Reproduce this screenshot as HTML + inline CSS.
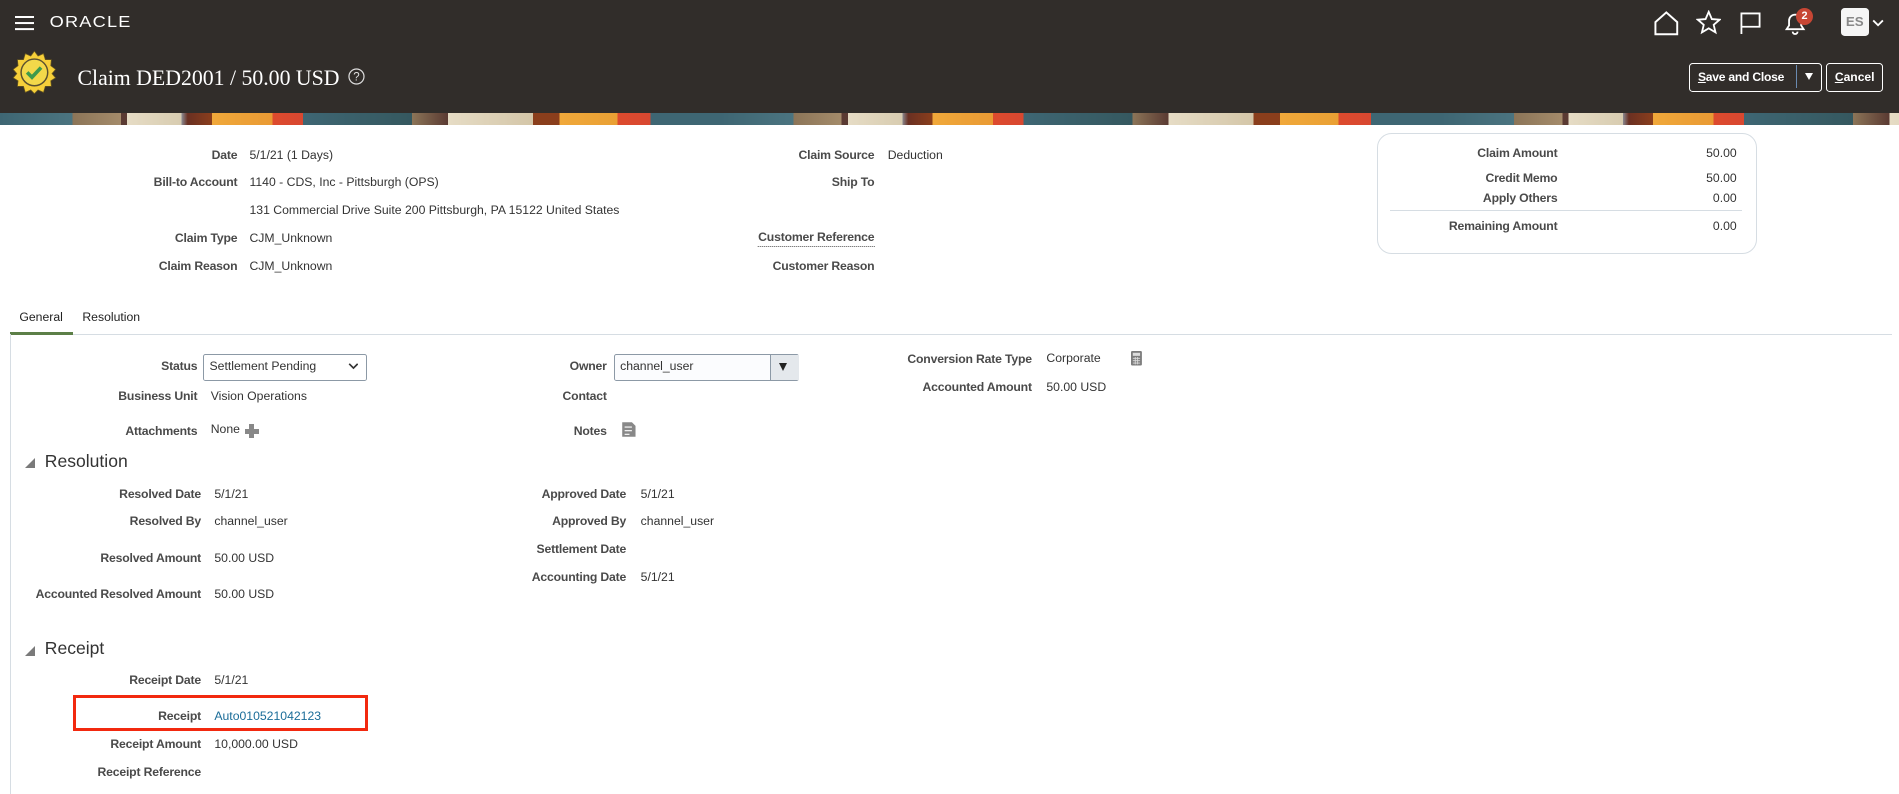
<!DOCTYPE html>
<html><head><meta charset="utf-8"><style>
html,body{margin:0;padding:0;background:#fff;overflow:hidden}
body{width:1899px;height:794px}
#w{zoom:1.21110;width:1568px;height:656px;position:relative;font-family:"Liberation Sans",Arial,sans-serif;font-size:10.1px;color:#333}
.a{position:absolute;white-space:nowrap;line-height:14px;margin-top:1px}
.l{position:absolute;white-space:nowrap;line-height:14px;margin-top:1px;text-align:right;font-weight:bold;color:#4a4a4a;transform:translateX(-100%);letter-spacing:-.15px}
.hd{position:absolute;left:0;top:0;width:1568px;height:93px;background:#312d2a}
.ban{position:absolute;left:0;top:93px;width:1568px;height:10px;background:repeating-linear-gradient(90deg,#3e6673 0,#4b7480 60px,#8c7558 60px,#a48b6a 100px,#5a3a32 100px,#5a3a32 105px,#e6dcc5 105px,#d8ccb0 150px,#8a8a92 150px,#6a3022 155px,#8a3e1c 175px,#f0a83a 175px,#e99a34 225px,#dd4a2e 225px,#d84830 250px,#3e6673 250px,#35585f 340px,#8c7558 340px,#5a3a32 370px,#e6dcc5 370px,#d4c6a8 440px,#8a3e1c 440px,#8a3e1c 462px,#f0a83a 462px,#e9a034 510px,#dd4a2e 510px,#d84830 537px,#3e6673 537px,#3e6673 595px)}
.sec{position:absolute;font-size:14.5px;color:#333;line-height:18px}
.tri{position:absolute;width:0;height:0;border-left:9px solid transparent;border-bottom:9px solid #7a7a7a}
</style></head><body><div id="w">
<div class="hd"></div>
<div class="ban"></div>
<div style="position:absolute;left:12px;top:13px;width:16px;height:2px;background:#fff;box-shadow:0 5px 0 #fff,0 10px 0 #fff"></div>
<div class="a" style="left:41px;top:10px;color:#fff;font-size:15px;letter-spacing:1px;line-height:16px;transform:scaleY(.85)">ORACLE</div>
<svg style="position:absolute;left:10px;top:41px" width="37" height="37" viewBox="0 0 37 37"><polygon points="18.5,1 21.5,5 26,3 27.5,8 32.5,8 32,13 36,16 33,19.5 36,23 32,25.5 32.5,30 27.5,30 26,35 21.5,33 18.5,36 15.5,33 11,35 9.5,30 4.5,30 5,25.5 1,23 4,19.5 1,16 5,13 4.5,8 9.5,8 11,3 15.5,5" fill="#f6cf3a" stroke="#6b5a1e" stroke-width=".6"/><circle cx="18.5" cy="18.5" r="11" fill="#f3d84a" stroke="#5a5030" stroke-width="1.2"/><path d="M12.5 18.5l4 4 7.5-8" stroke="#3d9a4c" stroke-width="3" fill="none"/></svg>
<div class="a" style="left:64px;top:53px;color:#fff;font-family:'Liberation Serif',serif;font-size:18px;line-height:22px">Claim DED2001 / 50.00 USD</div>
<svg style="position:absolute;left:287px;top:56px" width="14" height="14"><circle cx="7" cy="7" r="6.2" fill="none" stroke="#ddd" stroke-width="1"/><text x="7" y="10.5" font-size="9.5" fill="#ddd" text-anchor="middle" font-family="Liberation Sans">?</text></svg>
<svg style="position:absolute;left:1365px;top:8px" width="22" height="22"><path d="M2 10 L11 2 L20 10 V20 H2 Z" fill="none" stroke="#fff" stroke-width="1.6"/></svg>
<svg style="position:absolute;left:1400px;top:8px" width="21" height="21"><path d="M10.5 1.5l2.6 6 6.4.5-4.9 4.2 1.5 6.3-5.6-3.4-5.6 3.4 1.5-6.3L1.5 8l6.4-.5z" fill="none" stroke="#fff" stroke-width="1.5"/></svg>
<svg style="position:absolute;left:1436px;top:9px" width="20" height="20"><path d="M2 19V2h15v11H2" fill="none" stroke="#fff" stroke-width="1.5"/></svg>
<svg style="position:absolute;left:1472px;top:9px" width="20" height="20"><path d="M3 15h14l-2-3V8a5 5 0 0 0-10 0v4z M8 17a2 2 0 0 0 4 0" fill="none" stroke="#fff" stroke-width="1.5"/></svg>
<div style="position:absolute;left:1483px;top:7px;width:14px;height:14px;border-radius:50%;background:#c74634;color:#fff;font-size:9px;font-weight:bold;text-align:center;line-height:14px">2</div>
<div style="position:absolute;left:1520px;top:7px;width:23px;height:23px;border-radius:3px;background:#f5f5f5;color:#888;font-size:11px;font-weight:bold;text-align:center;line-height:23px">ES</div>
<svg style="position:absolute;left:1546px;top:15px" width="10" height="8"><path d="M1 2l4 4 4-4" fill="none" stroke="#fff" stroke-width="1.5"/></svg>
<div style="position:absolute;left:1395px;top:52px;width:108px;height:22px;border:1px solid #fff;border-radius:3px"></div>
<div class="a" style="left:1402px;top:56px;color:#fff;font-weight:bold;font-size:10px;letter-spacing:-.2px"><u>S</u>ave and Close</div>
<div style="position:absolute;left:1483px;top:54px;width:1px;height:19px;background:#6a8ab0"></div>
<div style="position:absolute;left:1490px;top:60px;border-left:4px solid transparent;border-right:4px solid transparent;border-top:6px solid #fff"></div>
<div style="position:absolute;left:1508px;top:52px;width:45px;height:22px;border:1px solid #fff;border-radius:3px"></div>
<div class="a" style="left:1515px;top:56px;color:#fff;font-weight:bold;font-size:10px"><u>C</u>ancel</div>

<div class="l" style="left:196px;top:120px">Date</div><div class="a" style="left:206px;top:120px">5/1/21 (1 Days)</div>
<div class="l" style="left:196px;top:143px">Bill-to Account</div><div class="a" style="left:206px;top:143px">1140 - CDS, Inc - Pittsburgh (OPS)</div>
<div class="a" style="left:206px;top:166px">131 Commercial Drive Suite 200 Pittsburgh, PA 15122 United States</div>
<div class="l" style="left:196px;top:189px">Claim Type</div><div class="a" style="left:206px;top:189px">CJM_Unknown</div>
<div class="l" style="left:196px;top:212px">Claim Reason</div><div class="a" style="left:206px;top:212px">CJM_Unknown</div>
<div class="l" style="left:722px;top:120px">Claim Source</div><div class="a" style="left:733px;top:120px">Deduction</div>
<div class="l" style="left:722px;top:143px">Ship To</div>
<div class="l" style="left:722px;top:189px;border-bottom:1px dotted #555;line-height:13px">Customer Reference</div>
<div class="l" style="left:722px;top:212px">Customer Reason</div>
<div style="position:absolute;left:1137px;top:110px;width:312px;height:98px;border:1px solid #d6dde3;border-radius:12px"></div>
<div class="l" style="left:1286px;top:119px">Claim Amount</div><div class="a" style="left:1434px;top:119px;transform:translateX(-100%)">50.00</div>
<div class="l" style="left:1286px;top:139px">Credit Memo</div><div class="a" style="left:1434px;top:139px;transform:translateX(-100%)">50.00</div>
<div class="l" style="left:1286px;top:156px">Apply Others</div><div class="a" style="left:1434px;top:156px;transform:translateX(-100%)">0.00</div>
<div style="position:absolute;left:1148px;top:173px;width:290px;height:1px;background:#d6dde3"></div>
<div class="l" style="left:1286px;top:179px">Remaining Amount</div><div class="a" style="left:1434px;top:179px;transform:translateX(-100%)">0.00</div>
<div class="a" style="left:16px;top:254px;color:#222">General</div>
<div class="a" style="left:68px;top:254px;color:#222">Resolution</div>
<div style="position:absolute;left:8px;top:276px;width:1554px;height:1px;background:#d6dde3"></div>
<div style="position:absolute;left:8px;top:274px;width:52px;height:3px;background:#5c7f47"></div>
<div style="position:absolute;left:8px;top:276px;width:1px;height:380px;background:#d6dde3"></div>
<div class="l" style="left:163px;top:295px">Status</div>
<div style="position:absolute;left:168px;top:292px;width:133px;height:21px;border:1px solid #8c99a6;border-radius:2px"></div>
<div class="a" style="left:173px;top:295px">Settlement Pending</div>
<svg style="position:absolute;left:287px;top:299px" width="9" height="7"><path d="M1 1.5l3.5 3.5 3.5-3.5" fill="none" stroke="#333" stroke-width="1.4"/></svg>
<div class="l" style="left:163px;top:319px">Business Unit</div><div class="a" style="left:174px;top:319px">Vision Operations</div>
<div class="l" style="left:163px;top:348px">Attachments</div><div class="a" style="left:174px;top:347px">None</div>
<div style="position:absolute;left:202px;top:354px;width:12px;height:4px;background:#888"></div><div style="position:absolute;left:206px;top:350px;width:4px;height:12px;background:#888"></div>
<div class="l" style="left:501px;top:295px">Owner</div>
<div style="position:absolute;left:507px;top:292px;width:151px;height:21px;border:1px solid #8c99a6;border-radius:2px;background:#fbfcfe"></div>
<div style="position:absolute;left:636px;top:293px;width:23px;height:21px;background:#e4e8ec;border-left:1px solid #8c99a6"></div>
<div style="position:absolute;left:643px;top:300px;border-left:4px solid transparent;border-right:4px solid transparent;border-top:7px solid #222"></div>
<div class="a" style="left:512px;top:295px">channel_user</div>
<div class="l" style="left:501px;top:319px">Contact</div>
<div class="l" style="left:501px;top:348px">Notes</div>
<svg style="position:absolute;left:513px;top:348px" width="13" height="14"><path d="M1 1h8l3 3v9H1z" fill="#888"/><path d="M3 5h6M3 8h6M3 11h4" stroke="#fff" stroke-width="1"/></svg>
<div class="l" style="left:852px;top:289px">Conversion Rate Type</div><div class="a" style="left:864px;top:288px">Corporate</div>
<svg style="position:absolute;left:934px;top:290px" width="9" height="12"><rect width="9" height="12" rx="1" fill="#7d7d7d"/><rect x="1.5" y="1.5" width="6" height="2.5" fill="#ddd"/><path d="M1.5 6h6M1.5 8h6M1.5 10h6M3.5 5v6M5.5 5v6" stroke="#ddd" stroke-width=".7"/></svg>
<div class="l" style="left:852px;top:312px">Accounted Amount</div><div class="a" style="left:864px;top:312px">50.00 USD</div>
<div class="tri" style="left:21px;top:378px"></div>
<div class="sec" style="left:37px;top:372px">Resolution</div>
<div class="l" style="left:166px;top:400px">Resolved Date</div><div class="a" style="left:177px;top:400px">5/1/21</div>
<div class="l" style="left:166px;top:423px">Resolved By</div><div class="a" style="left:177px;top:423px">channel_user</div>
<div class="l" style="left:166px;top:453px">Resolved Amount</div><div class="a" style="left:177px;top:453px">50.00 USD</div>
<div class="l" style="left:166px;top:483px">Accounted Resolved Amount</div><div class="a" style="left:177px;top:483px">50.00 USD</div>
<div class="l" style="left:517px;top:400px">Approved Date</div><div class="a" style="left:529px;top:400px">5/1/21</div>
<div class="l" style="left:517px;top:423px">Approved By</div><div class="a" style="left:529px;top:423px">channel_user</div>
<div class="l" style="left:517px;top:446px">Settlement Date</div>
<div class="l" style="left:517px;top:469px">Accounting Date</div><div class="a" style="left:529px;top:469px">5/1/21</div>
<div class="tri" style="left:21px;top:533px"></div>
<div class="sec" style="left:37px;top:527px">Receipt</div>
<div class="l" style="left:166px;top:554px">Receipt Date</div><div class="a" style="left:177px;top:554px">5/1/21</div>
<div style="position:absolute;left:60px;top:574px;width:239px;height:25px;border:3px solid #f2290f"></div>
<div class="l" style="left:166px;top:584px">Receipt</div><div class="a" style="left:177px;top:584px;color:#1a6c98">Auto010521042123</div>
<div class="l" style="left:166px;top:607px">Receipt Amount</div><div class="a" style="left:177px;top:607px">10,000.00 USD</div>
<div class="l" style="left:166px;top:630px">Receipt Reference</div>
</div></body></html>
